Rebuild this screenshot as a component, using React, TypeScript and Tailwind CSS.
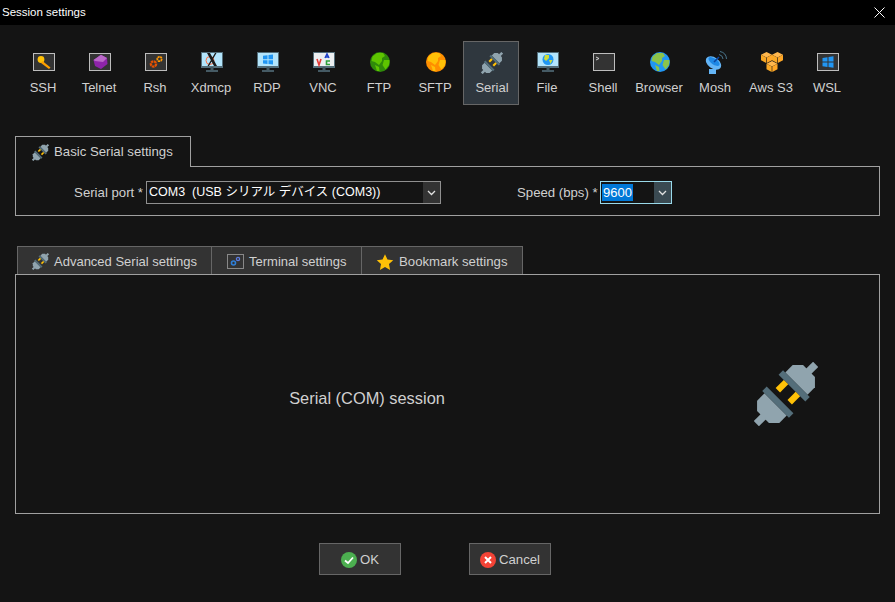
import React from "react";

const F = "[font-family:'Liberation_Sans','Noto_Sans_CJK_JP',sans-serif]";

function Plug({ size, className = "" }: { size: number; className?: string }) {
  return (
    <svg width={size} height={size} viewBox="-30.500 -30.500 61 61" className={className}>
      <g transform="rotate(45)">
        {[0, 180].map((r) => (
          <g key={r} transform={`rotate(${r})`}>
            <rect x="-3.500" y="-40" width="7" height="13" fill="#90a4ae" />
            <polygon points="-15,-14 15,-14 15,-24 8,-31 -8,-31 -15,-24" fill="#90a4ae" />
            <rect x="-18" y="-14" width="36" height="6" fill="#546e7a" />
          </g>
        ))}
        <rect x="-11" y="-8" width="6" height="11" fill="#ffc107" />
        <rect x="5" y="-8" width="6" height="11" fill="#ffc107" />
      </g>
    </svg>
  );
}

function Box({ children }: { children: React.ReactNode }) {
  return (
    <svg width="22" height="18" viewBox="0 0 22 18">
      <rect x="0.5" y="0.5" width="21" height="17" fill="#333" stroke="#bdbdbd" />
      {children}
    </svg>
  );
}

function Monitor({ children, fill = "#b3e5fc" }: { children: React.ReactNode; fill?: string }) {
  return (
    <svg width="22" height="20" viewBox="0 0 22 20">
      <rect x="0" y="0" width="22" height="16" fill="#546e7a" />
      <rect x="1" y="1" width="20" height="13" fill={fill} />
      <rect x="9.5" y="15" width="3" height="3" fill="#455a64" />
      <rect x="5" y="18" width="12" height="2" fill="#455a64" />
      {children}
    </svg>
  );
}

function Globe({ sea, land }: { sea: string; land: string }) {
  return (
    <svg width="20" height="20" viewBox="0 0 20 20">
      <circle cx="10" cy="10" r="10" fill={sea} />
      <path d="M7 1 L13 1 L15 4 L12 6 L12 9 L9 13 L5 10 L1.500 9 L2.500 4.500 Z" fill={land} />
      <path d="M14 8 L19.500 8 L19 13 L15.500 17.500 L12.500 13 Z" fill={land} />
      <path d="M5 13 L9 15 L9.500 19 L7 19 Z" fill={land} />
    </svg>
  );
}

const sessions: { label: string; icon: React.ReactNode }[] = [
  {
    label: "SSH",
    icon: (
      <Box>
        <circle cx="8" cy="6.500" r="3.400" fill="#ffc107" />
        <path d="M9.500 8 L17.500 14.500 L16 16 L8 10 Z" fill="#ffa000" />
      </Box>
    ),
  },
  {
    label: "Telnet",
    icon: (
      <Box>
        <polygon points="12,1.800 18,5 18.500,11 12,16 6,13 4.500,7" fill="#8e24aa" />
        <polygon points="12,1.800 18,5 14,9 6,8 4.500,7" fill="#ba68c8" />
      </Box>
    ),
  },
  {
    label: "Rsh",
    icon: (
      <Box>
        <circle cx="8.500" cy="11" r="2.600" fill="none" stroke="#e65100" strokeWidth="2.400" strokeDasharray="2.500 0.600" />
        <circle cx="14.500" cy="6" r="2.200" fill="none" stroke="#ff9800" strokeWidth="1.800" strokeDasharray="2 0.500" />
      </Box>
    ),
  },
  {
    label: "Xdmcp",
    icon: (
      <Monitor>
        <circle cx="9" cy="8.500" r="4" fill="none" stroke="#ff7043" strokeWidth="1" />
        <path d="M6 1 L9 1 L16 14 L13 14 Z M14 1 L15.500 1 L8 14 L6.500 14 Z" fill="#1a1a1a" />
      </Monitor>
    ),
  },
  {
    label: "RDP",
    icon: (
      <Monitor>
        <path d="M6 3.800 L10.500 3.200 V7.200 H6 Z M11.500 3 L16 2.400 V7.200 H11.500 Z M6 8.200 H10.500 V12 L6 11.400 Z M11.500 8.200 H16 V12.600 L11.500 12 Z" fill="#2196f3" />
      </Monitor>
    ),
  },
  {
    label: "VNC",
    icon: (
      <Monitor fill="#eceff1">
        <path d="M4 7 L6 13 L8 7" fill="none" stroke="#e53935" strokeWidth="1.600" />
        <path d="M12 6 L14 2 L16 6 M12.800 5 H15.200" fill="none" stroke="#1e40c8" strokeWidth="1.500" />
        <path d="M17 9 H13.500 V12.500 H17" fill="none" stroke="#2e9e3a" strokeWidth="1.600" />
      </Monitor>
    ),
  },
  { label: "FTP", icon: <Globe sea="#2f8a0a" land="#5ec400" /> },
  { label: "SFTP", icon: <Globe sea="#ff8f00" land="#ffc107" /> },
  { label: "Serial", icon: <Plug size={22} /> },
  {
    label: "File",
    icon: (
      <Monitor>
        <circle cx="11" cy="7.500" r="5.500" fill="#2196f3" />
        <path d="M8 3 L12 3 L12 6 L9 9 L7 7 Z M12 8 L15.500 8 L13.500 12 Z" fill="#cddc39" />
      </Monitor>
    ),
  },
  {
    label: "Shell",
    icon: (
      <Box>
        <path d="M3 4 L6 5.500 L3 7" fill="none" stroke="#e0e0e0" strokeWidth="0.900" />
      </Box>
    ),
  },
  { label: "Browser", icon: <Globe sea="#2196f3" land="#8bc34a" /> },
  {
    label: "Mosh",
    icon: (
      <svg width="22" height="23" viewBox="0 0 22 23">
        <rect x="4" y="18" width="7" height="5" fill="#64b5f6" />
        <ellipse cx="8.500" cy="12" rx="8.500" ry="5.500" transform="rotate(35 8.500 12)" fill="#64b5f6" />
        <ellipse cx="9" cy="10.500" rx="6.500" ry="3" transform="rotate(35 9 10.500)" fill="#1e88e5" />
        <path d="M9 11 L14 6" stroke="#0d47a1" strokeWidth="1.600" />
        <path d="M14 3.500 A5 5 0 0 1 18 8 M15 0.500 A8 8 0 0 1 21.500 8" fill="none" stroke="#4f7f99" strokeWidth="0.900" />
      </svg>
    ),
  },
  {
    label: "Aws S3",
    icon: (
      <svg width="22" height="20" viewBox="0 0 22 20">
        {[[0, 0], [11, 0], [5.500, 9]].map(([x, y], i) => (
          <g key={i} transform={`translate(${x} ${y})`}>
            <polygon points="5.500,0 11,2.800 5.500,5.500 0,2.800" fill="#ffb74d" />
            <polygon points="0,2.800 5.200,5.500 5.200,11 0,8.300" fill="#f9a825" />
            <polygon points="11,2.800 5.800,5.500 5.800,11 11,8.300" fill="#ffa726" />
          </g>
        ))}
      </svg>
    ),
  },
  {
    label: "WSL",
    icon: (
      <Box>
        <path d="M5.500 5 L10.500 4.200 V8.600 H5.500 Z M11.500 4 L16.500 3.200 V8.600 H11.500 Z M5.500 9.600 H10.500 V14 L5.500 13.200 Z M11.500 9.600 H16.500 V14.800 L11.500 14 Z" fill="#2196f3" />
      </Box>
    ),
  },
];

function Star() {
  return (
    <svg width="18" height="18" viewBox="0 0 24 24">
      <path d="M12 1.500 L15.300 8.500 L23 9.500 L17.300 14.800 L18.800 22.500 L12 18.700 L5.200 22.500 L6.700 14.800 L1 9.500 L8.700 8.500 Z" fill="#ffc107" />
    </svg>
  );
}

function Caret() {
  return (
    <svg width="9" height="6" viewBox="0 0 9 6">
      <path d="M1 1 L4.500 4.500 L8 1" fill="none" stroke="#e0e0e0" strokeWidth="1.300" />
    </svg>
  );
}

export default function App() {
  return (
    <div className={`${F} w-[895px] h-[602px] bg-[#141414] text-[#d0d0d0] text-[13.2px] flex flex-col overflow-hidden`}>
      <div className="h-[25px] bg-black flex items-center justify-between pl-[2px] pr-[10px] text-white text-[11.5px]">
        <span>Session settings</span>
        <svg width="11" height="11" viewBox="0 0 11 11">
          <path d="M0.500 0.500 L10.500 10.500 M10.500 0.500 L0.500 10.500" stroke="#fff" strokeWidth="1" />
        </svg>
      </div>

      <div className="flex pl-[15px] pt-[16px] h-[80px] text-[13px]">
        {sessions.map((s) => {
          const active = s.label === "Serial";
          return (
            <div
              key={s.label}
              className={`w-[56px] h-[64px] flex flex-col items-center ${active ? "bg-[#2f373e] border border-[#666]" : ""}`}
            >
              <div className="h-[24px] mt-[9px] pl-[2px] flex items-center justify-center">{s.icon}</div>
              <div className={`whitespace-nowrap ${active ? "mt-[3px] pl-[2px]" : "mt-[4px]"}`}>{s.label}</div>
            </div>
          );
        })}
      </div>

      <div className="pl-[15px] pt-[31px] w-[880px]">
        <div className="w-[176px] h-[31px] -mb-px border border-b-0 border-[#a0a0a0] bg-[#141414] flex items-center pl-[16px] gap-[5px] relative">
          <Plug size={17} />
          <span>Basic Serial settings</span>
        </div>
        <div className="h-[50px] pt-[3px] border border-[#a0a0a0] flex items-center">
          <span className="w-[127px] mt-[1px] text-right whitespace-nowrap">Serial port *</span>
          <div className="ml-[3px] w-[295px] h-[23px] border border-[#909090] flex items-center justify-between">
            <span className="pl-[2px] whitespace-pre text-white text-[12.5px]">COM3  (USB シリアル デバイス (COM3))</span>
            <span className="w-[17px] h-full bg-[#333] flex items-center justify-center"><Caret /></span>
          </div>
          <span className="ml-[76px] w-[80px] mt-[1px] text-right whitespace-nowrap">Speed (bps) *</span>
          <div className="ml-[3px] w-[72px] h-[23px] border border-[#99d9ea] flex items-center justify-between">
            <span className="px-[1px] ml-[1px] bg-[#0078d7] text-white text-[13px] leading-[17px]">9600</span>
            <span className="w-[17px] h-full bg-[#3a4a52] flex items-center justify-center"><Caret /></span>
          </div>
        </div>

        <div className="flex pl-[2px] mt-[30px] h-[28px] text-[13px]">
          <div className="w-[195px] pt-[2px] bg-[#333] border border-b-0 border-[#666] flex items-center pl-[14px] gap-[5px]">
            <Plug size={17} />
            <span>Advanced Serial settings</span>
          </div>
          <div className="w-[150px] pt-[2px] bg-[#333] border border-b-0 border-l-0 border-[#666] flex items-center pl-[15px] gap-[5px]">
            <svg width="17" height="15" viewBox="0 0 17 15">
              <rect x="0.5" y="0.5" width="16" height="14" fill="#333" stroke="#888" />
              <circle cx="6.500" cy="9" r="2" fill="none" stroke="#2f7fd8" strokeWidth="1.600" />
              <circle cx="11" cy="5" r="1.600" fill="none" stroke="#5c7ce0" strokeWidth="1.300" />
            </svg>
            <span>Terminal settings</span>
          </div>
          <div className="w-[161px] pt-[2px] bg-[#333] border border-b-0 border-l-0 border-[#666] flex items-center pl-[14px] gap-[5px]">
            <Star />
            <span className="text-[13.2px]">Bookmark settings</span>
          </div>
        </div>
        <div className="h-[240px] border border-[#a0a0a0] flex items-center">
          <div className="w-[702px] mt-[8px] text-center text-[16.4px]">Serial (COM) session</div>
          <Plug size={64} className="ml-[36px]" />
        </div>

        <div className="flex justify-center gap-[68px] mt-[29px] w-[840px]">
          <button className="w-[82px] h-[32px] pt-[1px] bg-[#333] border border-[#666] text-[#d0d0d0] flex items-center justify-center gap-[3px]">
            <svg width="16" height="16" viewBox="0 0 16 16">
              <circle cx="8" cy="8" r="8" fill="#4caf50" />
              <path d="M4 8.500 L7 11 L12 5.500" fill="none" stroke="#fff" strokeWidth="1.800" />
            </svg>
            OK
          </button>
          <button className="w-[82px] h-[32px] pt-[1px] bg-[#333] border border-[#666] text-[#d0d0d0] flex items-center justify-center gap-[3px]">
            <svg width="16" height="16" viewBox="0 0 16 16">
              <circle cx="8" cy="8" r="8" fill="#f44336" />
              <path d="M5 5 L11 11 M11 5 L5 11" fill="none" stroke="#fff" strokeWidth="2" />
            </svg>
            Cancel
          </button>
        </div>
      </div>
    </div>
  );
}
